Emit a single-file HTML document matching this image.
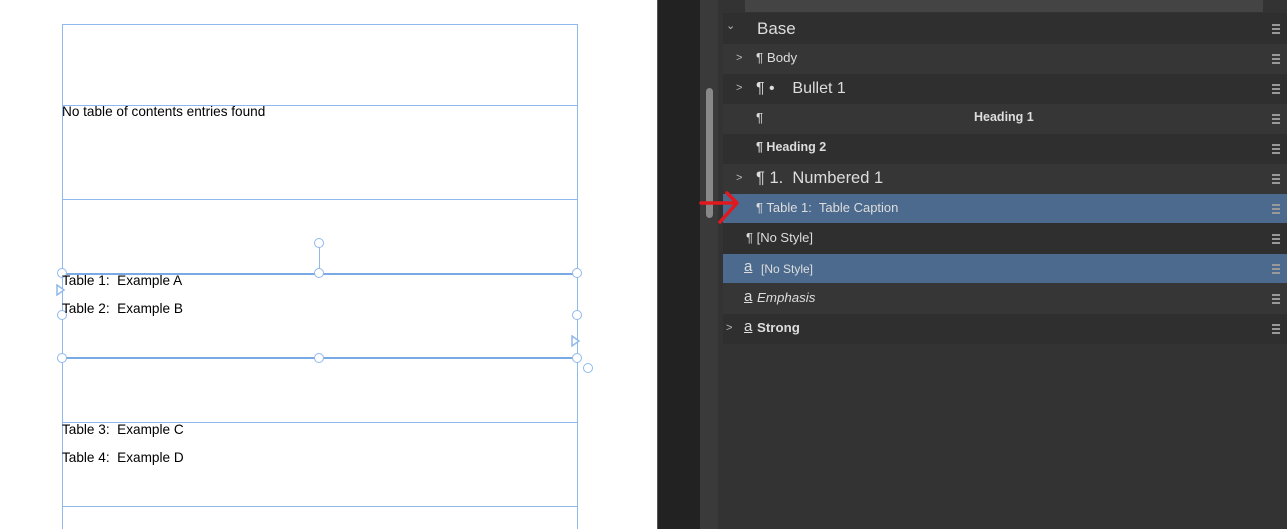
<!DOCTYPE html>
<html><head><style>
body{margin:0;width:1287px;height:529px;overflow:hidden;background:#fff;font-family:"Liberation Sans",sans-serif;position:relative}
.a{position:absolute}
.row{position:absolute;left:723px;width:564px;color:#ddd;font-size:13.3px}
.row span{position:absolute}
.ham{position:absolute;right:7px;top:50%;margin-top:-5px;width:8px;height:10px;background:repeating-linear-gradient(#999 0 2px,transparent 2px 4px)}
.chev{position:absolute;left:13px;color:#bbb;font-size:11px}
.t{position:absolute;left:62px;font-size:13.6px;color:#000}
.h{position:absolute;left:62px;width:515px;height:1px;background:#8fb9ec}
.hd{position:absolute;width:8px;height:8px;border:1.5px solid #8fb9ec;border-radius:50%;background:#fff}
</style></head><body>
<div class="a" style="left:62px;top:24px;width:1px;height:505px;background:#8fb9ec"></div>
<div class="a" style="left:577px;top:24px;width:1px;height:505px;background:#8fb9ec"></div>
<div class="h" style="top:24px"></div>
<div class="h" style="top:105px"></div>
<div class="h" style="top:199px"></div>
<div class="h" style="top:273px;height:2px;background:#7aaae6"></div>
<div class="h" style="top:357px;height:2px;background:#7aaae6"></div>
<div class="h" style="top:422px"></div>
<div class="h" style="top:506px"></div>
<div class="a" style="left:319px;top:246px;width:1px;height:27px;background:#8fb9ec"></div>
<div class="hd" style="left:314px;top:238px"></div>
<div class="hd" style="left:57px;top:268px"></div>
<div class="hd" style="left:314px;top:268px"></div>
<div class="hd" style="left:572px;top:268px"></div>
<div class="hd" style="left:57px;top:310px"></div>
<div class="hd" style="left:572px;top:310px"></div>
<div class="hd" style="left:57px;top:353px"></div>
<div class="hd" style="left:314px;top:353px"></div>
<div class="hd" style="left:572px;top:353px"></div>
<div class="hd" style="left:583px;top:363px"></div>
<svg class="a" style="left:56px;top:284px" width="10" height="12"><path d="M1 1L8 6L1 11Z" fill="#fff" stroke="#8fb9ec" stroke-width="1.5"/></svg>
<svg class="a" style="left:571px;top:335px" width="10" height="12"><path d="M1 1L8 6L1 11Z" fill="#fff" stroke="#8fb9ec" stroke-width="1.5"/></svg>
<div class="t" style="top:104px">No table of contents entries found</div>
<div class="t" style="top:273px">Table 1:&nbsp; Example A</div>
<div class="t" style="top:301px">Table 2:&nbsp; Example B</div>
<div class="t" style="top:422px">Table 3:&nbsp; Example C</div>
<div class="t" style="top:450px">Table 4:&nbsp; Example D</div>

<div class="a" style="left:657px;top:0;width:630px;height:529px;background:#333"></div>
<div class="a" style="left:657px;top:0;width:1px;height:529px;background:#555"></div>
<div class="a" style="left:658px;top:0;width:42px;height:529px;background:#222"></div>
<div class="a" style="left:700px;top:0;width:18px;height:529px;background:#3a3a3a"></div>
<div class="a" style="left:706px;top:88px;width:7px;height:130px;border-radius:4px;background:#888"></div>
<div class="a" style="left:745px;top:0;width:518px;height:12px;background:#444"></div>

<div class="row" style="top:13px;height:31px;background:#2f2f2f"><span class="chev" style="left:3px;top:6px">⌄</span><span style="left:34px;top:6px;font-size:17px">Base</span><div class="ham"></div></div>
<div class="row" style="top:44px;height:30px;background:#363636"><span class="chev" style="top:8px">&gt;</span><span style="left:33px;top:6px">¶ Body</span><div class="ham"></div></div>
<div class="row" style="top:74px;height:30px;background:#2f2f2f"><span class="chev" style="top:8px">&gt;</span><span style="left:33px;top:6px;font-size:16px">¶ •&nbsp;&nbsp;&nbsp; Bullet 1</span><div class="ham"></div></div>
<div class="row" style="top:104px;height:30px;background:#363636"><span style="left:33px;top:6px">¶</span><span style="left:251px;top:6px;font-weight:bold;font-size:12.5px">Heading 1</span><div class="ham"></div></div>
<div class="row" style="top:134px;height:30px;background:#2f2f2f"><span style="left:33px;top:6px;font-weight:bold;font-size:12.5px">¶ Heading 2</span><div class="ham"></div></div>
<div class="row" style="top:164px;height:30px;background:#363636"><span class="chev" style="top:8px">&gt;</span><span style="left:33px;top:5px;font-size:16.5px">¶ 1.&nbsp; Numbered 1</span><div class="ham"></div></div>
<div class="row" style="top:194px;height:29px;background:#4b6a8d"><span style="left:33px;top:6px;font-size:13px">¶ Table 1:&nbsp; Table Caption</span><div class="ham"></div></div>
<div class="row" style="top:223px;height:31px;background:#2f2f2f"><span style="left:23px;top:7px;font-size:13px">¶ [No Style]</span><div class="ham"></div></div>
<div class="row" style="top:254px;height:29px;background:#4b6a8d"><span style="left:21px;top:4px;font-size:15px;text-decoration:underline">a</span><span style="left:38px;top:8px;font-size:12px">[No Style]</span><div class="ham"></div></div>
<div class="row" style="top:283px;height:31px;background:#363636"><span style="left:21px;top:5px;font-size:15px;text-decoration:underline">a</span><span style="left:34px;top:7px;font-style:italic">Emphasis</span><div class="ham"></div></div>
<div class="row" style="top:314px;height:30px;background:#2f2f2f"><span class="chev" style="left:3px;top:8px">&gt;</span><span style="left:21px;top:4px;font-size:15px;text-decoration:underline">a</span><span style="left:34px;top:6px;font-weight:bold">Strong</span><div class="ham"></div></div>

<svg class="a" style="left:698px;top:190px" width="44" height="36"><path d="M3 13H38M29 3L39 13L22 32" fill="none" stroke="#e0191f" stroke-width="3.5" stroke-linecap="round" stroke-linejoin="round"/></svg>
</body></html>
